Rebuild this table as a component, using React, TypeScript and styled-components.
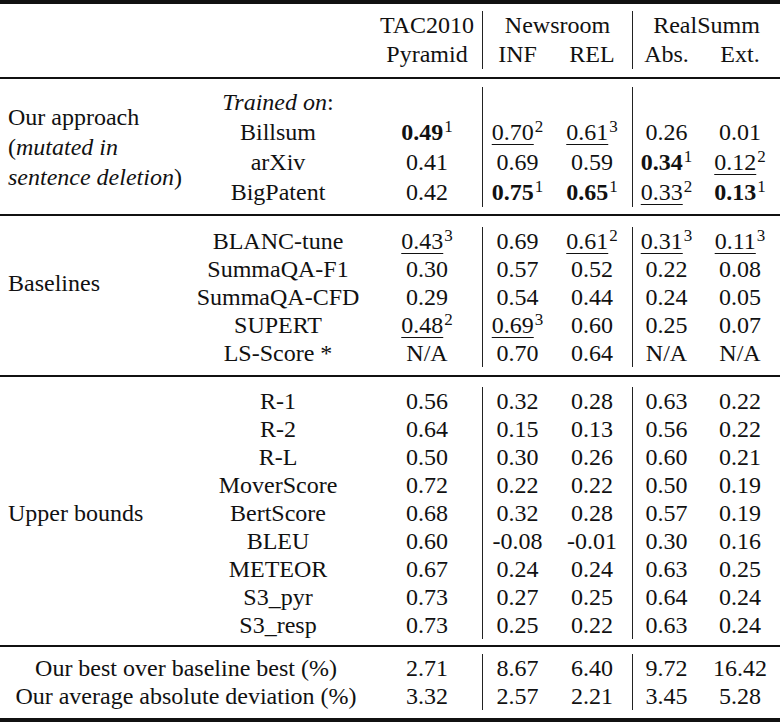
import React from "react";
import styled, { createGlobalStyle } from "styled-components";

const GlobalStyle = createGlobalStyle`
  html, body {
    margin: 0;
    padding: 0;
    background: #fff;
  }
  body {
    font-family: "Liberation Serif", "Times New Roman", serif;
    color: #111;
  }
`;

const Table = styled.div`
  width: 780px;
  font-size: 24px;
`;

const Rule = styled.div<{ $above: number; $below: number; $weight: number }>`
  height: ${(p) => p.$weight}px;
  background: #111;
  margin: ${(p) => p.$above}px 0 ${(p) => p.$below}px;
`;

const Section = styled.div`
  display: flex;
`;

const GroupLabel = styled.div<{ $lift?: number }>`
  flex: none;
  width: 176px;
  padding-left: 8px;
  padding-bottom: ${(p) => p.$lift ?? 0}px;
  align-self: center;
  line-height: 30px;
  white-space: nowrap;
`;

const Body = styled.div<{ $cols: string; $row: number }>`
  display: grid;
  grid-template-columns: ${(p) => p.$cols};
  grid-auto-rows: ${(p) => p.$row}px;
  line-height: ${(p) => p.$row}px;
`;

const Cell = styled.div<{ $divider?: boolean; $span?: number }>`
  grid-column: span ${(p) => p.$span ?? 1};
  text-align: center;
  white-space: nowrap;
  border-left: ${(p) => (p.$divider ? "1px solid #222" : "none")};
`;

const Em = styled.i`
  font-style: italic;
`;

const Num = styled.span<{ $bold?: boolean; $under?: boolean }>`
  font-weight: ${(p) => (p.$bold ? 700 : 400)};
  text-decoration: ${(p) => (p.$under ? "underline" : "none")};
  text-decoration-thickness: 1px;
  text-underline-offset: 4px;
`;

const Rank = styled.span`
  font-size: 17px;
  line-height: 0;
  vertical-align: 8px;
  margin-left: 1px;
`;

type Mark = { v: string; b?: boolean; u?: boolean; r?: number };
type Val = string | Mark;
type Row = { name: React.ReactNode; vals: Val[] };

const METRIC_COLS = "188px 110px 70px 80px 68px 80px";
const SUMMARY_COLS = "372px 110px 70px 80px 68px 80px";

const ours: Row[] = [
  { name: <><Em>Trained on</Em>:</>, vals: ["", "", "", "", ""] },
  {
    name: "Billsum",
    vals: [{ v: "0.49", b: true, r: 1 }, { v: "0.70", u: true, r: 2 }, { v: "0.61", u: true, r: 3 }, "0.26", "0.01"],
  },
  {
    name: "arXiv",
    vals: ["0.41", "0.69", "0.59", { v: "0.34", b: true, r: 1 }, { v: "0.12", u: true, r: 2 }],
  },
  {
    name: "BigPatent",
    vals: ["0.42", { v: "0.75", b: true, r: 1 }, { v: "0.65", b: true, r: 1 }, { v: "0.33", u: true, r: 2 }, { v: "0.13", b: true, r: 1 }],
  },
];

const baselines: Row[] = [
  {
    name: "BLANC-tune",
    vals: [{ v: "0.43", u: true, r: 3 }, "0.69", { v: "0.61", u: true, r: 2 }, { v: "0.31", u: true, r: 3 }, { v: "0.11", u: true, r: 3 }],
  },
  { name: "SummaQA-F1", vals: ["0.30", "0.57", "0.52", "0.22", "0.08"] },
  { name: "SummaQA-CFD", vals: ["0.29", "0.54", "0.44", "0.24", "0.05"] },
  { name: "SUPERT", vals: [{ v: "0.48", u: true, r: 2 }, { v: "0.69", u: true, r: 3 }, "0.60", "0.25", "0.07"] },
  { name: "LS-Score *", vals: ["N/A", "0.70", "0.64", "N/A", "N/A"] },
];

const upper: Row[] = [
  { name: "R-1", vals: ["0.56", "0.32", "0.28", "0.63", "0.22"] },
  { name: "R-2", vals: ["0.64", "0.15", "0.13", "0.56", "0.22"] },
  { name: "R-L", vals: ["0.50", "0.30", "0.26", "0.60", "0.21"] },
  { name: "MoverScore", vals: ["0.72", "0.22", "0.22", "0.50", "0.19"] },
  { name: "BertScore", vals: ["0.68", "0.32", "0.28", "0.57", "0.19"] },
  { name: "BLEU", vals: ["0.60", "-0.08", "-0.01", "0.30", "0.16"] },
  { name: "METEOR", vals: ["0.67", "0.24", "0.24", "0.63", "0.25"] },
  { name: "S3_pyr", vals: ["0.73", "0.27", "0.25", "0.64", "0.24"] },
  { name: "S3_resp", vals: ["0.73", "0.25", "0.22", "0.63", "0.24"] },
];

const summary: Row[] = [
  { name: "Our best over baseline best (%)", vals: ["2.71", "8.67", "6.40", "9.72", "16.42"] },
  { name: "Our average absolute deviation (%)", vals: ["3.32", "2.57", "2.21", "3.45", "5.28"] },
];

function Value({ val }: { val: Val }) {
  const m: Mark = typeof val === "string" ? { v: val } : val;
  return (
    <>
      <Num $bold={m.b} $under={m.u}>{m.v}</Num>
      {m.r ? <Rank>{m.r}</Rank> : null}
    </>
  );
}

function Rows({ rows }: { rows: Row[] }) {
  return (
    <>
      {rows.map((row, i) => (
        <React.Fragment key={i}>
          <Cell>{row.name}</Cell>
          {row.vals.map((val, j) => (
            <Cell key={j} $divider={j === 1 || j === 3}>
              <Value val={val} />
            </Cell>
          ))}
        </React.Fragment>
      ))}
    </>
  );
}

export default function App() {
  return (
    <>
      <GlobalStyle />
      <Table>
        <Rule $above={0} $below={7} $weight={4} />
        <Section>
          <GroupLabel />
          <Body $cols={METRIC_COLS} $row={29}>
            <Cell />
            <Cell>TAC2010</Cell>
            <Cell $span={2} $divider>Newsroom</Cell>
            <Cell $span={2} $divider>RealSumm</Cell>
            <Cell />
            <Cell>Pyramid</Cell>
            <Cell $divider>INF</Cell>
            <Cell>REL</Cell>
            <Cell $divider>Abs.</Cell>
            <Cell>Ext.</Cell>
          </Body>
        </Section>
        <Rule $above={8} $below={8} $weight={2} />
        <Section>
          <GroupLabel>
            Our approach
            <br />(<Em>mutated in</Em>
            <br />
            <Em>sentence deletion</Em>)
          </GroupLabel>
          <Body $cols={METRIC_COLS} $row={30}>
            <Rows rows={ours} />
          </Body>
        </Section>
        <Rule $above={7} $below={11} $weight={2} />
        <Section>
          <GroupLabel $lift={28}>Baselines</GroupLabel>
          <Body $cols={METRIC_COLS} $row={28}>
            <Rows rows={baselines} />
          </Body>
        </Section>
        <Rule $above={8} $below={10} $weight={2} />
        <Section>
          <GroupLabel>Upper bounds</GroupLabel>
          <Body $cols={METRIC_COLS} $row={28}>
            <Rows rows={upper} />
          </Body>
        </Section>
        <Rule $above={6} $below={7} $weight={2} />
        <Section>
          <Body $cols={SUMMARY_COLS} $row={28}>
            <Rows rows={summary} />
          </Body>
        </Section>
        <Rule $above={8} $below={0} $weight={4} />
      </Table>
    </>
  );
}
